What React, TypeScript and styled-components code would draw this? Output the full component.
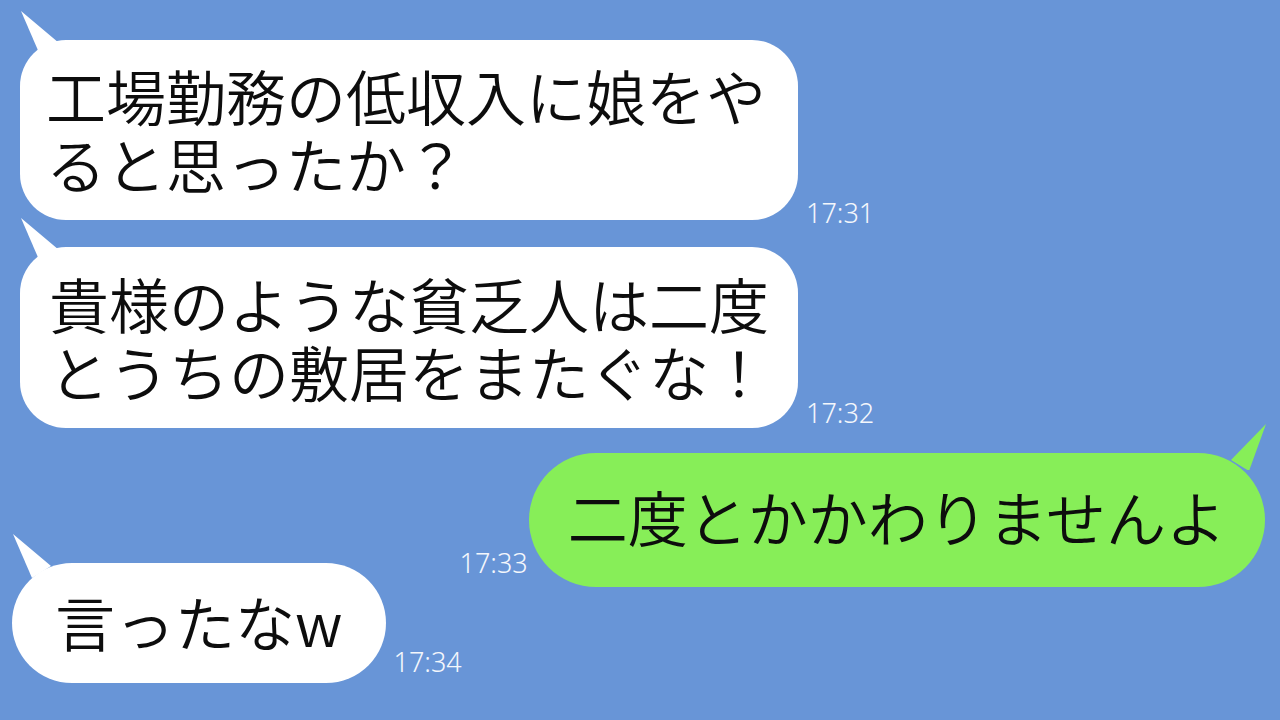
import React from "react";
import styled, { createGlobalStyle } from "styled-components";

const GlobalStyle = createGlobalStyle`
  html, body {
    margin: 0;
    padding: 0;
    background: #6895d7;
  }
`;

const Screen = styled.div`
  width: 1280px;
  height: 720px;
  box-sizing: border-box;
  padding: 40px 15px 0 20px;
  background: #6895d7;
  display: flex;
  flex-direction: column;
  overflow: hidden;
  font-family: "Noto Sans CJK JP", "Noto Sans", sans-serif;
`;

const Row = styled.div<{ $mine?: boolean; $top: number; $shift?: number }>`
  display: flex;
  flex-direction: ${(p) => (p.$mine ? "row-reverse" : "row")};
  align-items: flex-end;
  margin-top: ${(p) => p.$top}px;
  margin-left: ${(p) => p.$shift ?? 0}px;
`;

const Bubble = styled.div<{
  $mine?: boolean;
  $radius: number;
  $pad: string;
}>`
  position: relative;
  background: ${(p) => (p.$mine ? "#87ee58" : "#ffffff")};
  border-radius: ${(p) => p.$radius}px;
  padding: ${(p) => p.$pad};
  font-size: 60px;
  font-weight: 350;
  line-height: 68px;
  color: #0d0d0d;
  white-space: pre;

  &::before {
    content: "";
    position: absolute;
    top: -29px;
    width: 40px;
    height: 46px;
    background: inherit;
    ${(p) =>
      p.$mine
        ? `right: -2px; clip-path: polygon(39px 0, 22px 47px, 4px 36px);`
        : `left: 1px; clip-path: polygon(0 0, 38px 32px, 19px 44px);`}
  }
`;

const Time = styled.span<{ $drop: number; $mine?: boolean }>`
  font-family: "Noto Sans", "Liberation Sans", sans-serif;
  font-weight: 300;
  font-size: 27px;
  line-height: 26px;
  color: #f4f7fc;
  margin: ${(p) => (p.$mine ? "0 1px 0 0" : "0 0 0 8px")};
  margin-bottom: ${(p) => p.$drop}px;
`;

type Msg = {
  text: string;
  time: string;
  mine?: boolean;
  top: number;
  shift?: number;
  radius: number;
  pad: string;
  drop: number;
};

const messages: Msg[] = [
  {
    text: "工場勤務の低収入に娘をや\nると思ったか？",
    time: "17:31",
    top: 0,
    radius: 46,
    pad: "21px 32px 23px 26px",
    drop: -6,
  },
  {
    text: "貴様のような貧乏人は二度\nとうちの敷居をまたぐな！",
    time: "17:32",
    top: 27,
    radius: 46,
    pad: "22px 29px 23px 29px",
    drop: 2,
  },
  {
    text: "二度とかかわりませんよ",
    time: "17:33",
    mine: true,
    top: 25,
    radius: 67,
    pad: "29px 39px 37px 39px",
    drop: 11,
  },
  {
    text: "言ったなw",
    time: "17:34",
    top: -24,
    shift: -8,
    radius: 60,
    pad: "24px 43px 28px 43px",
    drop: 8,
  },
];

export default function App() {
  return (
    <>
      <GlobalStyle />
      <Screen>
        {messages.map((m) => (
          <Row key={m.time} $mine={m.mine} $top={m.top} $shift={m.shift}>
            <Bubble $mine={m.mine} $radius={m.radius} $pad={m.pad}>
              {m.text}
            </Bubble>
            <Time $drop={m.drop} $mine={m.mine}>
              {m.time}
            </Time>
          </Row>
        ))}
      </Screen>
    </>
  );
}
